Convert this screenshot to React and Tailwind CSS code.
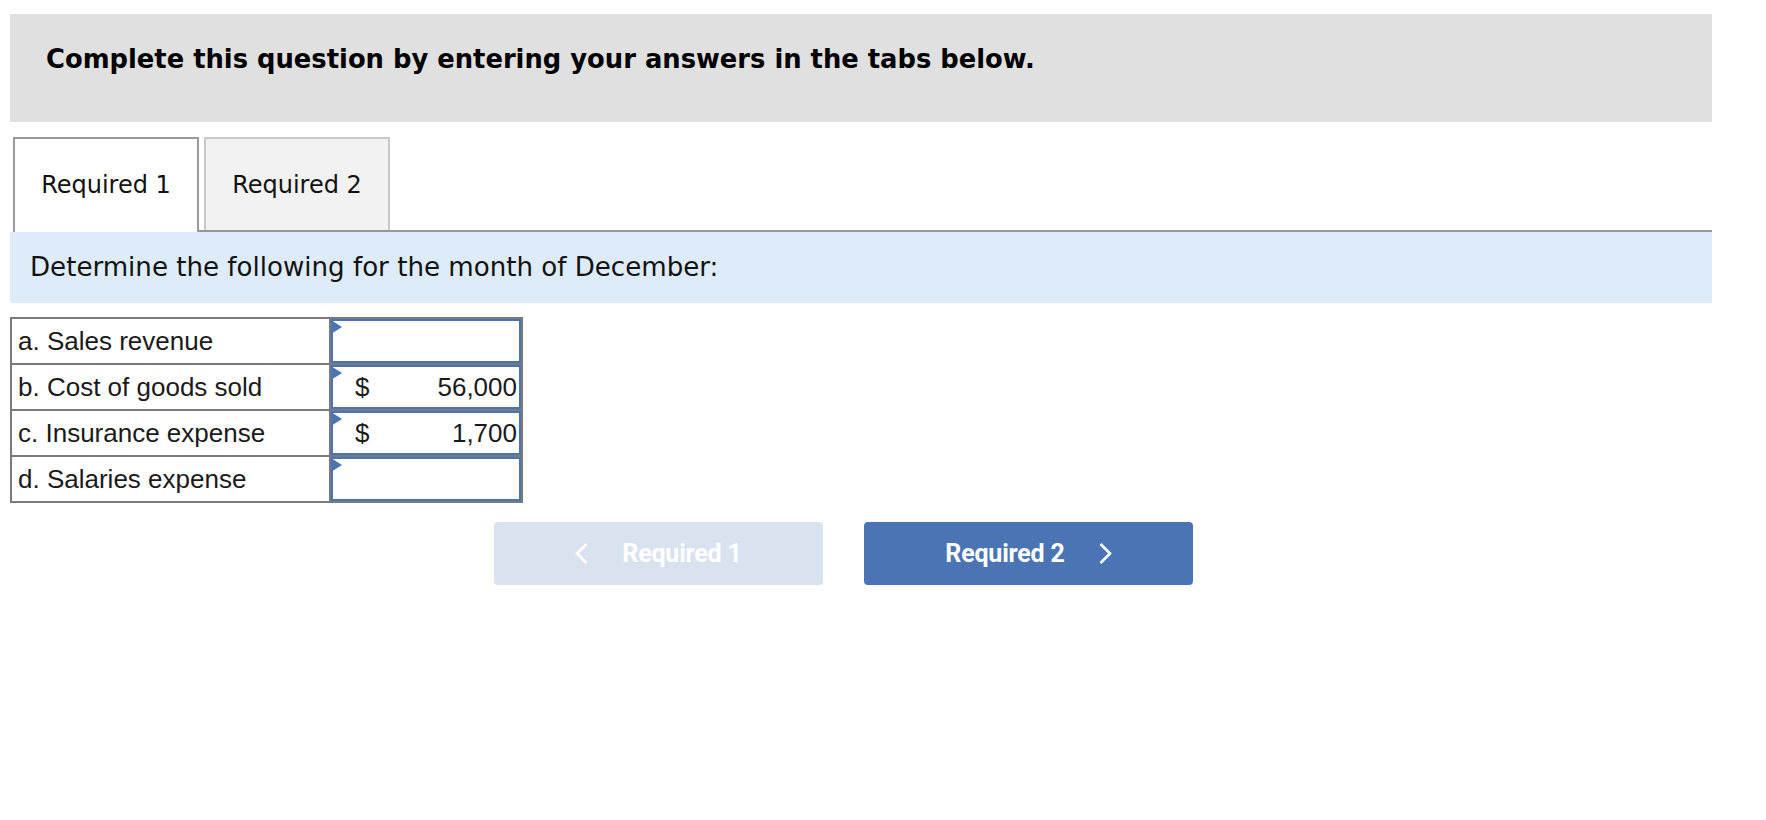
import React from "react";

function Chevron({ dir }) {
  return (
    <svg width="13" height="21" viewBox="0 0 13 21" fill="none" stroke="white" strokeWidth="2.6" strokeLinecap="butt" strokeLinejoin="miter">
      {dir === "left" ? <polyline points="11.5,1 2,10.5 11.5,20" /> : <polyline points="1.5,1 11,10.5 1.5,20" />}
    </svg>
  );
}

function Triangle() {
  return (
    <svg className="absolute left-[-2px] top-[-1px]" width="11" height="14" viewBox="0 0 11 14">
      <polygon points="0,0 11,7 0,14" fill="#4a74b4" />
    </svg>
  );
}

const rows = [
  { label: "a. Sales revenue", dollar: false, value: "" },
  { label: "b. Cost of goods sold", dollar: true, value: "56,000" },
  { label: "c. Insurance expense", dollar: true, value: "1,700" },
  { label: "d. Salaries expense", dollar: false, value: "" },
];

export default function App() {
  return (
    <div className="w-[1766px] h-[820px] bg-white">
      <div className="ml-[10px] w-[1702px] pt-[14px]">
        <div className="h-[108px] bg-[#e0e0e0] pl-[36px] pt-[30px]">
          <div className="font-['DejaVu_Sans',sans-serif] font-bold text-[25.8px] leading-[30px] text-black">
            Complete this question by entering your answers in the tabs below.
          </div>
        </div>

        <div className="mt-[15px] flex items-end pl-[3px] font-['DejaVu_Sans',sans-serif] text-[24px] text-[#111]">
          <div className="w-[186px] h-[95px] border-2 border-b-0 border-[#9a9a9a] bg-white flex items-center justify-center pb-[2px]">
            Required 1
          </div>
          <div className="flex-1 flex border-b-2 border-[#959798] pl-[5px]">
            <div className="w-[186px] h-[93px] border-2 border-b-0 border-[#c8c8c8] bg-[#f2f2f2] flex items-center justify-center">
              Required 2
            </div>
          </div>
        </div>

        <div className="h-[71px] bg-[#deebf8] flex items-center pl-[20px] font-['DejaVu_Sans',sans-serif] text-[26.1px] text-[#111]">
          Determine the following for the month of December:
        </div>

        <div className="mt-[14px] w-[513px] grid grid-cols-[317px_190px] gap-[2px] p-[2px] bg-[#7a7a7a] font-['Liberation_Sans',Arial,sans-serif] text-[26px] text-[#1a1a1a]">
          {rows.map((r) => (
            <React.Fragment key={r.label}>
              <div className="h-[44px] bg-white flex items-center pl-[6px]">{r.label}</div>
              <div className="relative h-[44px] bg-white border-2 border-[#4a74b4] flex items-center justify-between pl-[22px] pr-[2px]">
                <Triangle />
                <span>{r.dollar ? "$" : ""}</span>
                <span>{r.value}</span>
              </div>
            </React.Fragment>
          ))}
        </div>

        <div className="mt-[19px] flex gap-[41px] pl-[484px] font-['Roboto',sans-serif] font-bold text-[25px] text-white">
          <div className="w-[329px] h-[63px] rounded-[4px] bg-[#d9e3ef] flex items-center justify-center gap-[34px]">
            <Chevron dir="left" />
            <span className="tracking-[-0.2px]">Required 1</span>
          </div>
          <div className="w-[329px] h-[63px] rounded-[4px] bg-[#4a74b4] flex items-center justify-center gap-[34px]">
            <span className="tracking-[-0.2px]">Required 2</span>
            <Chevron dir="right" />
          </div>
        </div>
      </div>
    </div>
  );
}
